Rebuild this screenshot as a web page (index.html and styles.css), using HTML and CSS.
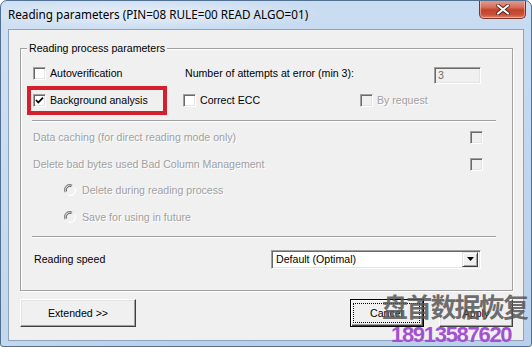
FILE: index.html
```html
<!DOCTYPE html>
<html>
<head>
<meta charset="utf-8">
<link rel="stylesheet" href="styles.css">
</head>
<body>
<div class="window">
  <div class="titlebar">
    <span class="title">Reading parameters (PIN=08 RULE=00 READ ALGO=01)</span>
    <div class="close">
      <svg width="14" height="11" viewBox="0 0 14 11"><path d="M2 1.5 L12 9.5 M12 1.5 L2 9.5" stroke="#4a1a14" stroke-width="3.6" stroke-linecap="round"/><path d="M2 1.5 L12 9.5 M12 1.5 L2 9.5" stroke="#fff" stroke-width="2.2" stroke-linecap="round"/></svg>
    </div>
  </div>
  <div class="client">
    <div class="group">
      <span class="legend">Reading process parameters</span>
      <div class="row row1">
        <div class="col1"><span class="cb"></span><span>Autoverification</span></div>
        <div class="col2 grow">Number of attempts at error (min 3):</div>
        <div class="field">3</div>
      </div>
      <div class="row row2">
        <div class="col1 hl"><span class="cb"><svg width="11" height="11" viewBox="0 0 11 11"><path d="M2 5 L4.3 7.5 L9 2.6" fill="none" stroke="#000" stroke-width="1.8"/></svg></span><span>Background analysis</span></div>
        <div class="col2"><span class="cb"></span><span>Correct ECC</span></div>
        <div class="col3 dis"><span class="cb off"></span><span>By request</span></div>
      </div>
      <div class="sep sep1"></div>
      <div class="row row3 spread dis">
        <span>Data caching (for direct reading mode only)</span><span class="cb off"></span>
      </div>
      <div class="row row4 spread dis">
        <span>Delete bad bytes used Bad Column Management</span><span class="cb off"></span>
      </div>
      <div class="row row5 indent dis">
        <svg class="radio" width="12" height="12" viewBox="0 0 12 12"><circle cx="6" cy="6" r="5.5" fill="#f0f0f0"/><path d="M1.2 8.2 A5.2 5.2 0 0 1 8.2 1.2" fill="none" stroke="#8a8a8a" stroke-width="1.2"/><path d="M2.4 7.4 A4 4 0 0 1 7.4 2.4" fill="none" stroke="#505050" stroke-width="1"/><path d="M10.8 3.8 A5.2 5.2 0 0 1 3.8 10.8" fill="none" stroke="#fff" stroke-width="1.2"/></svg>
        <span>Delete during reading process</span>
      </div>
      <div class="row row6 indent dis">
        <svg class="radio" width="12" height="12" viewBox="0 0 12 12"><circle cx="6" cy="6" r="5.5" fill="#f0f0f0"/><path d="M1.2 8.2 A5.2 5.2 0 0 1 8.2 1.2" fill="none" stroke="#8a8a8a" stroke-width="1.2"/><path d="M2.4 7.4 A4 4 0 0 1 7.4 2.4" fill="none" stroke="#505050" stroke-width="1"/><path d="M10.8 3.8 A5.2 5.2 0 0 1 3.8 10.8" fill="none" stroke="#fff" stroke-width="1.2"/></svg>
        <span>Save for using in future</span>
      </div>
      <div class="sep sep2"></div>
      <div class="row row7">
        <span>Reading speed</span>
        <div class="select">
          <span class="sel-text">Default (Optimal)</span>
          <span class="drop"><svg width="7" height="4" viewBox="0 0 7 4"><path d="M0 0 H7 L3.5 4 Z" fill="#000"/></svg></span>
        </div>
      </div>
    </div>
    <div class="buttons">
      <div class="btn ext">Extended &gt;&gt;</div>
      <div class="btn cancel"><span class="focus">Cancel</span></div>
      <div class="btn apply">Apply</div>
    </div>
  </div>
  <div class="wm-cn">盘首数据恢复</div>
  <div class="wm-num">18913587620</div>
</div>
</body>
</html>
```
FILE: styles.css
```css
body {
  margin: 0;
  background: #ffffff;
}
.window {
  position: relative;
  width: 532px;
  height: 347px;
  box-sizing: border-box;
  border: 1px solid #52708f;
  border-radius: 7px 7px 3px 3px;
  background: linear-gradient(90deg, rgba(255,255,255,0.15), rgba(255,255,255,0) 40%), linear-gradient(#c9dcf1, #b9d0ea);
  display: flex;
  flex-direction: column;
  overflow: hidden;
  font-family: "Liberation Sans", Arial, sans-serif;
  font-size: 10.6px;
  color: #000;
}
.titlebar {
  height: 28px;
  display: flex;
  align-items: flex-start;
  padding-left: 7px;
  background: radial-gradient(ellipse 260px 22px at 150px 13px, rgba(255,255,255,0.55), rgba(255,255,255,0) 70%);
}
.title {
  font-family: "Noto Sans", "Open Sans", sans-serif;
  font-size: 11.7px;
  line-height: 16px;
  padding-top: 5px;
  color: #000;
}
.close {
  margin-left: auto;
  margin-right: 5px;
  margin-top: -1px;
  width: 47px;
  height: 19px;
  box-sizing: border-box;
  border: 1px solid #7d3328;
  border-top: none;
  border-radius: 0 0 5px 5px;
  background: linear-gradient(#e4a091 0%, #d6705d 40%, #c2432c 55%, #c94e38 80%, #e0806a 100%);
  box-shadow: inset 0 0 0 1px rgba(255,220,210,0.5);
  display: flex;
  align-items: center;
  justify-content: center;
}
.client {
  margin: 0 7px;
  height: 312px;
  box-sizing: border-box;
  border: 1px solid #8ea4bd;
  background: #f0f0f0;
  display: flex;
  flex-direction: column;
}
.group {
  margin: 18px 10px 0 11px;
  border: 1px solid #a0a0a0;
  box-shadow: 1px 1px 0 #fff, inset 1px 1px 0 #fff;
  display: flex;
  flex-direction: column;
  padding-bottom: 21px;
}
.legend {
  align-self: flex-start;
  margin: -7px 0 0 6px;
  padding: 0 2px;
  background: #f0f0f0;
  line-height: 13px;
  height: 13px;
}
.row {
  height: 20px;
  display: flex;
  align-items: center;
  padding-left: 12px;
}
.row1 { margin-top: 8px; }
.row2 { margin-top: 7px; }
.row3 { margin-top: 5px; }
.row4 { margin-top: 7px; }
.row5 { margin-top: 6px; }
.row6 { margin-top: 7px; }
.row7 { margin-top: 11px; padding-left: 13px; }
.col1 {
  width: 152px;
  display: flex;
  align-items: center;
  height: 20px;
}
.col2 {
  width: 177px;
  display: flex;
  align-items: center;
}
.col3 {
  display: flex;
  align-items: center;
}
.grow { flex: 1; }
.hl {
  outline: 4px solid #d4202c;
  outline-offset: 0;
  margin-left: -2px;
  padding-left: 2px;
  width: 130px;
  height: 21px;
  margin-right: 20px;
  position: relative;
}
.cb {
  width: 13px;
  height: 13px;
  box-sizing: border-box;
  border: 1px solid;
  border-color: #a0a0a0 #fff #fff #a0a0a0;
  box-shadow: inset 1px 1px 0 #696969, inset -1px -1px 0 #e3e3e3;
  background: #fff;
  margin-right: 4px;
  display: flex;
  align-items: center;
  justify-content: center;
  flex: none;
}
.cb.off { background: #f0f0f0; }
.dis {
  color: #a0a0a0;
  text-shadow: 1px 1px 0 #fff;
}
.field {
  width: 47px;
  height: 17px;
  box-sizing: border-box;
  margin: 4px 31px 0 0;
  border: 1px solid;
  border-color: #a0a0a0 #fff #fff #a0a0a0;
  box-shadow: inset 1px 1px 0 #696969, inset -1px -1px 0 #e3e3e3;
  background: #f0f0f0;
  color: #6d6d6d;
  padding-left: 3px;
  line-height: 15px;
}
.sep {
  margin-left: 11px;
  width: 464px;
  height: 0;
  border-top: 1px solid #a0a0a0;
  border-bottom: 1px solid #fff;
}
.sep1 { margin-top: 10px; }
.sep2 { margin-top: 9px; }
.spread {
  justify-content: space-between;
  padding-right: 29px;
}
.spread .cb { margin-right: 0; }
.indent { padding-left: 43px; }
.radio { margin-right: 6px; flex: none; }
.select {
  margin-left: auto;
  margin-right: 31px;
  width: 210px;
  height: 19px;
  box-sizing: border-box;
  border: 1px solid;
  border-color: #a0a0a0 #fff #fff #a0a0a0;
  box-shadow: inset 1px 1px 0 #696969, inset -1px -1px 0 #e3e3e3;
  background: #fff;
  display: flex;
  align-items: center;
  padding: 2px;
}
.sel-text { flex: 1; padding-left: 2px; }
.drop {
  width: 16px;
  height: 15px;
  box-sizing: border-box;
  background: #f0f0f0;
  border: 1px solid;
  border-color: #e3e3e3 #404040 #404040 #e3e3e3;
  box-shadow: inset 1px 1px 0 #fff, inset -1px -1px 0 #a0a0a0;
  display: flex;
  align-items: center;
  justify-content: center;
}
.buttons {
  margin-top: 8px;
  display: flex;
  padding-right: 10px;
}
.btn {
  height: 28px;
  box-sizing: border-box;
  border: 1px solid;
  border-color: #fff #404040 #404040 #fff;
  box-shadow: inset -1px -1px 0 #a0a0a0, inset 1px 1px 0 #e3e3e3;
  background: #f0f0f0;
  display: flex;
  align-items: center;
  justify-content: center;
}
.ext {
  margin-left: 11px;
  width: 116px;
}
.cancel {
  margin-left: auto;
  width: 74px;
  border: 1px solid #000;
  box-shadow: inset 1px 1px 0 #fff, inset -1px -1px 0 #404040, inset -2px -2px 0 #a0a0a0;
  padding: 3px 3px 3px 2px;
}
.focus {
  flex: 1;
  align-self: stretch;
  border: 1px dotted #000;
  display: flex;
  align-items: center;
  justify-content: center;
}
.apply {
  margin-left: 15px;
  width: 74px;
}
.wm-cn {
  position: absolute;
  left: 381px;
  top: 290px;
  font-family: "Noto Sans CJK SC", sans-serif;
  font-size: 26px;
  line-height: 30px;
  letter-spacing: -1.8px;
  color: rgba(85, 85, 85, 0.85);
  font-weight: 700;
}
.wm-num {
  position: absolute;
  left: 390px;
  top: 322px;
  font-family: "Liberation Sans", Arial, sans-serif;
  font-weight: bold;
  font-size: 22px;
  line-height: 24px;
  letter-spacing: -1.3px;
  color: #a450d2;
}
```
